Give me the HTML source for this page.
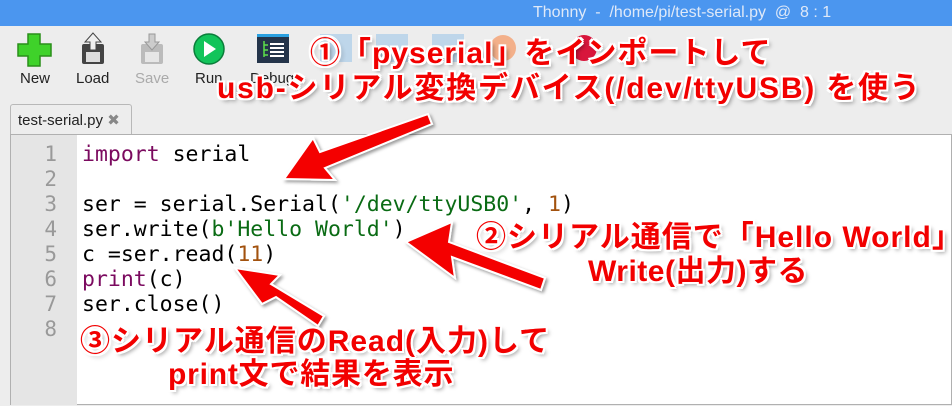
<!DOCTYPE html>
<html><head><meta charset="utf-8"><style>
*{margin:0;padding:0;box-sizing:border-box}
body{width:952px;height:406px;overflow:hidden;background:#ededed;font-family:"Liberation Sans","Noto Sans CJK JP",sans-serif;position:relative}
.title{position:absolute;left:0;top:0;width:952px;height:26px;background:#4b96ef;color:#dfe9f8;font-size:16px;line-height:26px}
.title span{position:absolute;left:533px}
.lbl{position:absolute;top:70px;font-size:15px;color:#222}
.tab{position:absolute;left:10px;top:104px;width:122px;height:32px;border:1px solid #b8b8b8;border-bottom:none;border-radius:3px 3px 0 0;background:#ededed;font-size:15px;color:#222;padding:6px 0 0 7px}
.edit{position:absolute;left:10px;top:134px;width:942px;height:271px;border:1px solid #b0b0b0;background:#fff}
.gut{position:absolute;left:0;top:0;width:66px;height:270px;background:#e5e5e5}
.code{position:absolute;top:7px;font-family:"DejaVu Sans Mono",monospace;font-size:21.5px;line-height:25px;white-space:pre}
.num{left:0;width:46px;text-align:right;color:#999;font-size:21px}
.src{left:71px;color:#000}
.k{color:#7b0a5f}.s{color:#0a6b14}.n{color:#a2520e}
.ann{position:absolute;color:#f20000;font-weight:bold;font-size:30px;white-space:nowrap;font-family:"Liberation Sans","Noto Sans CJK JP",sans-serif;
text-shadow:2px 0 0 #fff,-2px 0 0 #fff,0 2px 0 #fff,0 -2px 0 #fff,2px 2px 0 #fff,-2px -2px 0 #fff,2px -2px 0 #fff,-2px 2px 0 #fff,3px 3px 4px rgba(0,0,0,.4);line-height:34px}
svg{position:absolute;left:0;top:0}
</style></head><body>
<div class="title"><span>Thonny &nbsp;-&nbsp; /home/pi/test-serial.py &nbsp;@ &nbsp;8 : 1</span></div>
<svg width="952" height="406">
<path d="M28 34h12v10h11v12H40v10H28V56H18V44h10z" fill="#3fd22a" stroke="#2a8f1a" stroke-width="1.5"/>
<rect x="82" y="44" width="22" height="20" fill="#444" rx="2"/><rect x="86" y="52" width="14" height="10" fill="#ddd"/>
<path d="M93 33l-8 9h5v8h6v-8h5z" fill="#eee" stroke="#444"/>
<rect x="141" y="44" width="22" height="20" fill="#bbb" rx="2"/><rect x="145" y="52" width="14" height="10" fill="#e6e6e6"/>
<path d="M152 50l-7-8h4v-8h6v8h4z" fill="#ccc" stroke="#999"/>
<circle cx="209" cy="49" r="15" fill="#12c45a" stroke="#0a7d3a" stroke-width="1.5"/><path d="M204 41l12 8-12 8z" fill="#fff"/>
<rect x="257" y="34" width="32" height="29" fill="#24344a"/><rect x="257" y="34" width="32" height="3" fill="#2aa0e0"/>
<path d="M264 41v16M264 45h4M264 50h4M264 55h4" stroke="#5ce04a" stroke-width="1.5"/>
<path d="M270 44h14M270 48h14M270 52h14M270 56h14" stroke="#fff" stroke-width="2"/>
<rect x="320" y="34" width="32" height="28" fill="#9fc7e8" opacity=".6"/>
<rect x="376" y="34" width="32" height="28" fill="#9fc7e8" opacity=".6"/>
<rect x="432" y="34" width="32" height="28" fill="#9fc7e8" opacity=".6"/>
<circle cx="503" cy="48" r="13" fill="#f3b08a"/>
<circle cx="584" cy="48" r="13" fill="#d8163c"/>
</svg>
<div class="lbl" style="left:20px">New</div>
<div class="lbl" style="left:76px">Load</div>
<div class="lbl" style="left:135px;color:#aaa">Save</div>
<div class="lbl" style="left:195px">Run</div>
<div class="lbl" style="left:250px">Debug</div>
<div class="tab">test-serial.py <span style="color:#888">✖</span></div>
<div class="edit">
<div class="gut"></div>
<div class="code num">1
2
3
4
5
6
7
8</div>
<div class="code src"><span class="k">import</span> serial

ser = serial.Serial(<span class="s">'/dev/ttyUSB0'</span>, <span class="n">1</span>)
ser.write(<span class="s">b'Hello World'</span>)
c =ser.read(<span class="n">11</span>)
<span class="k">print</span>(c)
ser.close()
</div>
</div>
<svg width="952" height="406">
<defs><filter id="sh"><feDropShadow dx="2" dy="2" stdDeviation="1.5" flood-opacity=".4"/></filter></defs>
<g fill="#f40000" stroke="#fff" stroke-width="2" filter="url(#sh)">
<path d="M428 114L432 124L325 168L335 180L284 179L313 138L320 152Z"/>
<path d="M545 278L541 290L452 257L455 278L406 242L452 222L449 242Z"/>
<path d="M324 316L318 326L276 297L262 304L235 268L280 275L271 284Z"/>
</g>
</svg>
<div class="ann" style="left:310px;top:37px;letter-spacing:1px">①「pyserial」をインポートして</div>
<div class="ann" style="left:217px;top:72px;letter-spacing:1.8px">usb-シリアル変換デバイス(/dev/ttyUSB) を使う</div>
<div class="ann" style="left:476px;top:221px;letter-spacing:1px">②シリアル通信で「Hello World」と</div>
<div class="ann" style="left:588px;top:255px;letter-spacing:0.5px">Write(出力)する</div>
<div class="ann" style="left:80px;top:325px;letter-spacing:1px">③シリアル通信のRead(入力)して</div>
<div class="ann" style="left:168px;top:358px;letter-spacing:0.8px">print文で結果を表示</div>
</body></html>
